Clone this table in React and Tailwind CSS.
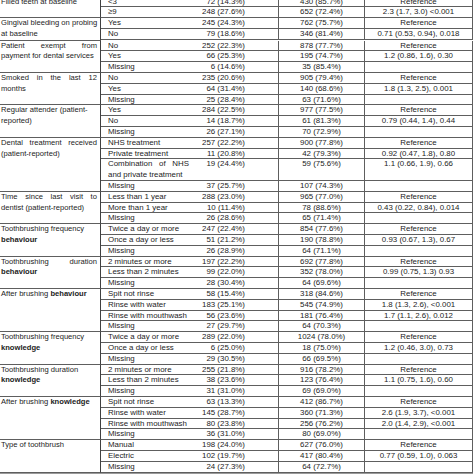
import clsx from 'clsx';

function J({ children }) {
    return (
        <div className="flex justify-between">
            {children.split(' ').map((w, i) => (
                <span key={i}>{w}</span>
            ))}
        </div>
    );
}

const groups = [
    {
        label: ['Filled teeth at baseline'],
        rows: [
            ['<3', '72 (14.3%)', '430 (85.7%)', 'Reference'],
            ['≥9', '248 (27.6%)', '652 (72.4%)', '2.3 (1.7, 3.0) <0.001'],
        ],
    },
    {
        label: ['Gingival bleeding on probing', 'at baseline'],
        rows: [
            ['Yes', '245 (24.3%)', '762 (75.7%)', 'Reference'],
            ['No', '79 (18.6%)', '346 (81.4%)', '0.71 (0.53, 0.94), 0.018'],
        ],
    },
    {
        label: [<J>Patient exempt from</J>, 'payment for dental services'],
        rows: [
            ['No', '252 (22.3%)', '878 (77.7%)', 'Reference'],
            ['Yes', '66 (25.3%)', '195 (74.7%)', '1.2 (0.86, 1.6), 0.30'],
            ['Missing', '6 (14.6%)', '35 (85.4%)', ''],
        ],
    },
    {
        label: [<J>Smoked in the last 12</J>, 'months'],
        rows: [
            ['No', '235 (20.6%)', '905 (79.4%)', 'Reference'],
            ['Yes', '64 (31.4%)', '140 (68.6%)', '1.8 (1.3, 2.5), 0.001'],
            ['Missing', '25 (28.4%)', '63 (71.6%)', ''],
        ],
    },
    {
        label: ['Regular attender (patient-', 'reported)'],
        rows: [
            ['Yes', '284 (22.5%)', '977 (77.5%)', 'Reference'],
            ['No', '14 (18.7%)', '61 (81.3%)', '0.79 (0.44, 1.4), 0.44'],
            ['Missing', '26 (27.1%)', '70 (72.9%)', ''],
        ],
    },
    {
        label: [<J>Dental treatment received</J>, '(patient-reported)'],
        rows: [
            ['NHS treatment', '257 (22.2%)', '900 (77.8%)', 'Reference'],
            ['Private treatment', '11 (20.8%)', '42 (79.3%)', '0.92 (0.47, 1.8), 0.80'],
            [
                <>
                    <J>Combination of NHS</J>
                    <div>and private treatment</div>
                </>,
                '19 (24.4%)',
                '59 (75.6%)',
                '1.1 (0.66, 1.9), 0.66',
                true,
            ],
            ['Missing', '37 (25.7%)', '107 (74.3%)', ''],
        ],
    },
    {
        label: [<J>Time since last visit to</J>, 'dentist (patient-reported)'],
        rows: [
            ['Less than 1 year', '288 (23.0%)', '965 (77.0%)', 'Reference'],
            ['More than 1 year', '10 (11.4%)', '78 (88.6%)', '0.43 (0.22, 0.84), 0.014'],
            ['Missing', '26 (28.6%)', '65 (71.4%)', ''],
        ],
    },
    {
        label: ['Toothbrushing frequency', <b>behaviour</b>],
        rows: [
            ['Twice a day or more', '247 (22.4%)', '854 (77.6%)', 'Reference'],
            ['Once a day or less', '51 (21.2%)', '190 (78.8%)', '0.93 (0.67, 1.3), 0.67'],
            ['Missing', '26 (28.9%)', '64 (71.1%)', ''],
        ],
    },
    {
        label: [<J>Toothbrushing duration</J>, <b>behaviour</b>],
        rows: [
            ['2 minutes or more', '197 (22.2%)', '692 (77.8%)', 'Reference'],
            ['Less than 2 minutes', '99 (22.0%)', '352 (78.0%)', '0.99 (0.75, 1.3) 0.93'],
            ['Missing', '28 (30.4%)', '64 (69.6%)', ''],
        ],
    },
    {
        label: [<>After brushing <b>behaviour</b></>],
        rows: [
            ['Spit not rinse', '58 (15.4%)', '318 (84.6%)', 'Reference'],
            ['Rinse with water', '183 (25.1%)', '545 (74.9%)', '1.8 (1.3, 2.6), <0.001'],
            ['Rinse with mouthwash', '56 (23.6%)', '181 (76.4%)', '1.7 (1.1, 2.6), 0.012'],
            ['Missing', '27 (29.7%)', '64 (70.3%)', ''],
        ],
    },
    {
        label: ['Toothbrushing frequency', <b>knowledge</b>],
        rows: [
            ['Twice a day or more', '289 (22.0%)', '1024 (78.0%)', 'Reference'],
            ['Once a day or less', '6 (25.0%)', '18 (75.0%)', '1.2 (0.46, 3.0), 0.73'],
            ['Missing', '29 (30.5%)', '66 (69.5%)', ''],
        ],
    },
    {
        label: ['Toothbrushing duration', <b>knowledge</b>],
        rows: [
            ['2 minutes or more', '255 (21.8%)', '916 (78.2%)', 'Reference'],
            ['Less than 2 minutes', '38 (23.6%)', '123 (76.4%)', '1.1 (0.75, 1.6), 0.60'],
            ['Missing', '31 (31.0%)', '69 (69.0%)', ''],
        ],
    },
    {
        label: [<>After brushing <b>knowledge</b></>],
        rows: [
            ['Spit not rinse', '63 (13.3%)', '412 (86.7%)', 'Reference'],
            ['Rinse with water', '145 (28.7%)', '360 (71.3%)', '2.6 (1.9, 3.7), <0.001'],
            ['Rinse with mouthwash', '80 (23.8%)', '256 (76.2%)', '2.0 (1.4, 2.9), <0.001'],
            ['Missing', '36 (31.0%)', '80 (69.0%)', ''],
        ],
    },
    {
        label: ['Type of toothbrush'],
        rows: [
            ['Manual', '198 (24.0%)', '627 (76.0%)', 'Reference'],
            ['Electric', '102 (19.7%)', '417 (80.4%)', '0.77 (0.59, 1.0), 0.063'],
            ['Missing', '24 (27.3%)', '64 (72.7%)', ''],
        ],
    },
];

function Row({ r }) {
    return (
        <div className={clsx('flex border-b border-[#5e5e5e]', r[4] ? 'h-[21.6px]' : 'h-[10.8px]')}>
            <div className="w-[96px] pl-[7px] pr-[8px] whitespace-nowrap">{r[0]}</div>
            <div className="w-[82px] pr-[33px] text-right border-r border-[#5e5e5e] whitespace-nowrap">{r[1]}</div>
            <div className="w-[86px] text-center border-r border-[#5e5e5e] whitespace-nowrap">{r[2]}</div>
            <div className="flex-1 text-center border-r border-[#5e5e5e] whitespace-nowrap">{r[3]}</div>
        </div>
    );
}

export default function App() {
    return (
        <div className="w-[474px] h-[474px] overflow-hidden bg-white">
            <div className="mt-[-3.5px] w-[473px] text-[7.9px] leading-[10.8px] text-[#1c1c1c] font-['Liberation_Sans',Arial,sans-serif]">
                {groups.map((g, gi) => (
                    <div key={gi} className="flex">
                        <div className="w-[101px] shrink-0 pl-[1px] pr-[3px] text-[7.6px] border-r border-b border-r-[#404040] border-b-[#5e5e5e] whitespace-nowrap">
                            {g.label.map((l, li) => (
                                <div key={li}>{l}</div>
                            ))}
                        </div>
                        <div className="flex-1 flex flex-col">
                            {g.rows.map((r, ri) => (
                                <Row key={ri} r={r} />
                            ))}
                        </div>
                    </div>
                ))}
                <div className="h-[4px] bg-[#9a9a9a]"></div>
            </div>
        </div>
    );
}
